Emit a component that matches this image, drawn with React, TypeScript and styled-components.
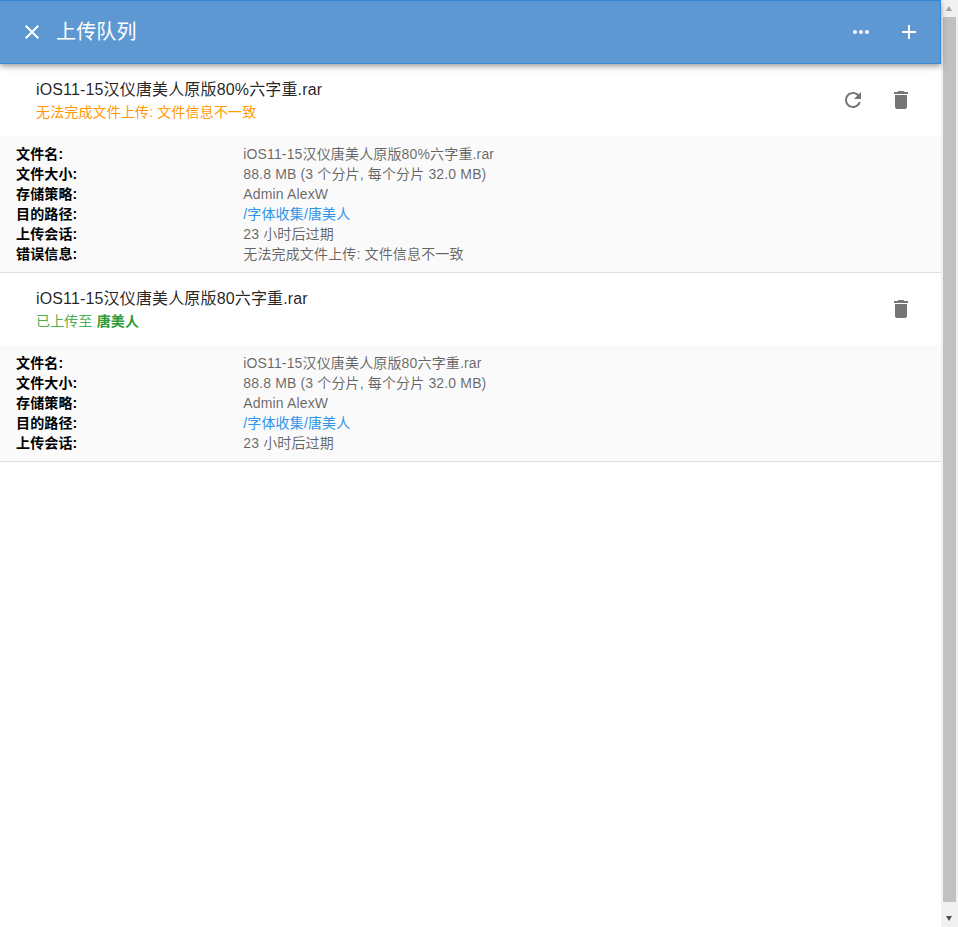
import React from 'react'
import styled, { createGlobalStyle } from 'styled-components'

const ICONS = {
  close: 'M19 6.41L17.59 5 12 10.59 6.41 5 5 6.41 10.59 12 5 17.59 6.41 19 12 13.41 17.59 19 19 17.59 13.41 12z',
  more: 'M6 10c-1.1 0-2 .9-2 2s.9 2 2 2 2-.9 2-2-.9-2-2-2zm12 0c-1.1 0-2 .9-2 2s.9 2 2 2 2-.9 2-2-.9-2-2-2zm-6 0c-1.1 0-2 .9-2 2s.9 2 2 2 2-.9 2-2-.9-2-2-2z',
  add: 'M19 13h-6v6h-2v-6H5v-2h6V5h2v6h6v2z',
  refresh:
    'M17.65 6.35C16.2 4.9 14.21 4 12 4c-4.42 0-7.99 3.58-7.99 8s3.57 8 7.99 8c3.73 0 6.84-2.55 7.73-6h-2.08c-.82 2.33-3.04 4-5.65 4-3.31 0-6-2.69-6-6s2.69-6 6-6c1.66 0 3.14.69 4.22 1.78L13 11h7V4l-2.35 2.35z',
  trash: 'M6 19c0 1.1.9 2 2 2h8c1.1 0 2-.9 2-2V7H6v12zM19 4h-3.5l-1-1h-5l-1 1H5v2h14V4z',
}

type DetailRow = { label: string; value: string; link?: boolean }

type Upload = {
  name: string
  status: React.ReactNode
  tone: 'error' | 'success'
  retry?: boolean
  details: DetailRow[]
}

const uploads: Upload[] = [
  {
    name: 'iOS11-15汉仪唐美人原版80%六字重.rar',
    status: '无法完成文件上传: 文件信息不一致',
    tone: 'error',
    retry: true,
    details: [
      { label: '文件名:', value: 'iOS11-15汉仪唐美人原版80%六字重.rar' },
      { label: '文件大小:', value: '88.8 MB (3 个分片, 每个分片 32.0 MB)' },
      { label: '存储策略:', value: 'Admin AlexW' },
      { label: '目的路径:', value: '/字体收集/唐美人', link: true },
      { label: '上传会话:', value: '23 小时后过期' },
      { label: '错误信息:', value: '无法完成文件上传: 文件信息不一致' },
    ],
  },
  {
    name: 'iOS11-15汉仪唐美人原版80六字重.rar',
    status: null,
    tone: 'success',
    details: [
      { label: '文件名:', value: 'iOS11-15汉仪唐美人原版80六字重.rar' },
      { label: '文件大小:', value: '88.8 MB (3 个分片, 每个分片 32.0 MB)' },
      { label: '存储策略:', value: 'Admin AlexW' },
      { label: '目的路径:', value: '/字体收集/唐美人', link: true },
      { label: '上传会话:', value: '23 小时后过期' },
    ],
  },
]

function Icon({ name }: { name: keyof typeof ICONS }) {
  return (
    <Svg viewBox="0 0 24 24">
      <path d={ICONS[name]} />
    </Svg>
  )
}

export default function App() {
  return (
    <>
      <GlobalStyle />
      <Page>
        <Main>
          <AppBar>
            <BarButton>
              <Icon name="close" />
            </BarButton>
            <Title>上传队列</Title>
            <BarButton>
              <Icon name="more" />
            </BarButton>
            <BarButton>
              <Icon name="add" />
            </BarButton>
          </AppBar>
          {uploads.map((upload) => (
            <Item key={upload.name}>
              <ItemHead>
                <ItemText>
                  <FileName>{upload.name}</FileName>
                  <Status tone={upload.tone}>
                    {upload.status ?? (
                      <>
                        已上传至 <strong>唐美人</strong>
                      </>
                    )}
                  </Status>
                </ItemText>
                {upload.retry && (
                  <ActionButton>
                    <Icon name="refresh" />
                  </ActionButton>
                )}
                <ActionButton>
                  <Icon name="trash" />
                </ActionButton>
              </ItemHead>
              <Details>
                {upload.details.map((row) => (
                  <Row key={row.label}>
                    <Label>{row.label}</Label>
                    <Value $link={row.link}>{row.value}</Value>
                  </Row>
                ))}
              </Details>
            </Item>
          ))}
        </Main>
        <Scrollbar>
          <Arrow $up />
          <Thumb />
          <Arrow />
        </Scrollbar>
      </Page>
    </>
  )
}

const GlobalStyle = createGlobalStyle`
  html, body {
    margin: 0;
    height: 100%;
    background: #fff;
    font-family: "Liberation Sans", "Noto Sans CJK SC", sans-serif;
    letter-spacing: 0.15px;
  }
  #root {
    height: 100%;
  }
`

const Page = styled.div`
  display: flex;
  height: 927px;
  overflow: hidden;
`

const Main = styled.div`
  flex: 1;
  min-width: 0;
`

const AppBar = styled.header`
  position: relative;
  z-index: 1;
  display: flex;
  align-items: center;
  box-sizing: border-box;
  height: 64px;
  padding: 0 7px 0 8px;
  border-top: 1px solid #2f88d8;
  border-right: 1px solid #2f88d8;
  border-bottom: 1px solid #3f8ad0;
  background: #5e98d3;
  color: #fff;
  box-shadow: 0 2px 4px -1px rgba(0, 0, 0, 0.2), 0 4px 5px 0 rgba(0, 0, 0, 0.14),
    0 1px 10px 0 rgba(0, 0, 0, 0.12);
`

const Title = styled.h1`
  flex: 1;
  margin: 0;
  font-size: 20px;
  font-weight: 400;
  line-height: 1.4;
`

const Svg = styled.svg`
  display: block;
  width: 24px;
  height: 24px;
  fill: currentColor;
`

const BarButton = styled.button`
  display: flex;
  align-items: center;
  justify-content: center;
  width: 48px;
  height: 48px;
  padding: 0;
  border: 0;
  background: none;
  color: #fff;
`

const ActionButton = styled(BarButton)`
  color: rgba(0, 0, 0, 0.54);
`

const Item = styled.section`
  border-bottom: 1px solid #e0e0e0;
`

const ItemHead = styled.div`
  display: flex;
  align-items: center;
  box-sizing: border-box;
  height: 72px;
  padding: 0 16px 0 36px;
`

const ItemText = styled.div`
  flex: 1;
  min-width: 0;
`

const FileName = styled.div`
  font-size: 16px;
  line-height: 24px;
  color: rgba(0, 0, 0, 0.87);
`

const Status = styled.div<{ tone: 'error' | 'success' }>`
  font-size: 14px;
  line-height: 20px;
  color: ${({ tone }) => (tone === 'error' ? '#ff9800' : '#4caf50')};

  strong {
    color: #2e9b33;
  }
`

const Details = styled.div`
  padding: 8px 16px;
  background: #fafafa;
`

const Row = styled.div`
  display: flex;
  font-size: 14px;
  line-height: 20px;
`

const Label = styled.div`
  flex: 0 0 25%;
  font-weight: 700;
  color: #000;
`

const Value = styled.div<{ $link?: boolean }>`
  color: ${({ $link }) => ($link ? '#2f95e8' : 'rgba(0, 0, 0, 0.6)')};
`

const Scrollbar = styled.div`
  display: flex;
  flex: 0 0 17px;
  flex-direction: column;
  background: #f1f1f1;
`

const Arrow = styled.div<{ $up?: boolean }>`
  flex: 0 0 17px;
  position: relative;

  &::after {
    content: '';
    position: absolute;
    left: 5px;
    top: 6px;
    border-left: 3.5px solid transparent;
    border-right: 3.5px solid transparent;
    ${({ $up }) => ($up ? 'border-bottom: 5px solid #a3a3a3;' : 'border-top: 5px solid #505050;')}
  }
`

const Thumb = styled.div`
  flex: 1;
  margin: 0 2px 8px 2px;
  background: #c1c1c1;
`
